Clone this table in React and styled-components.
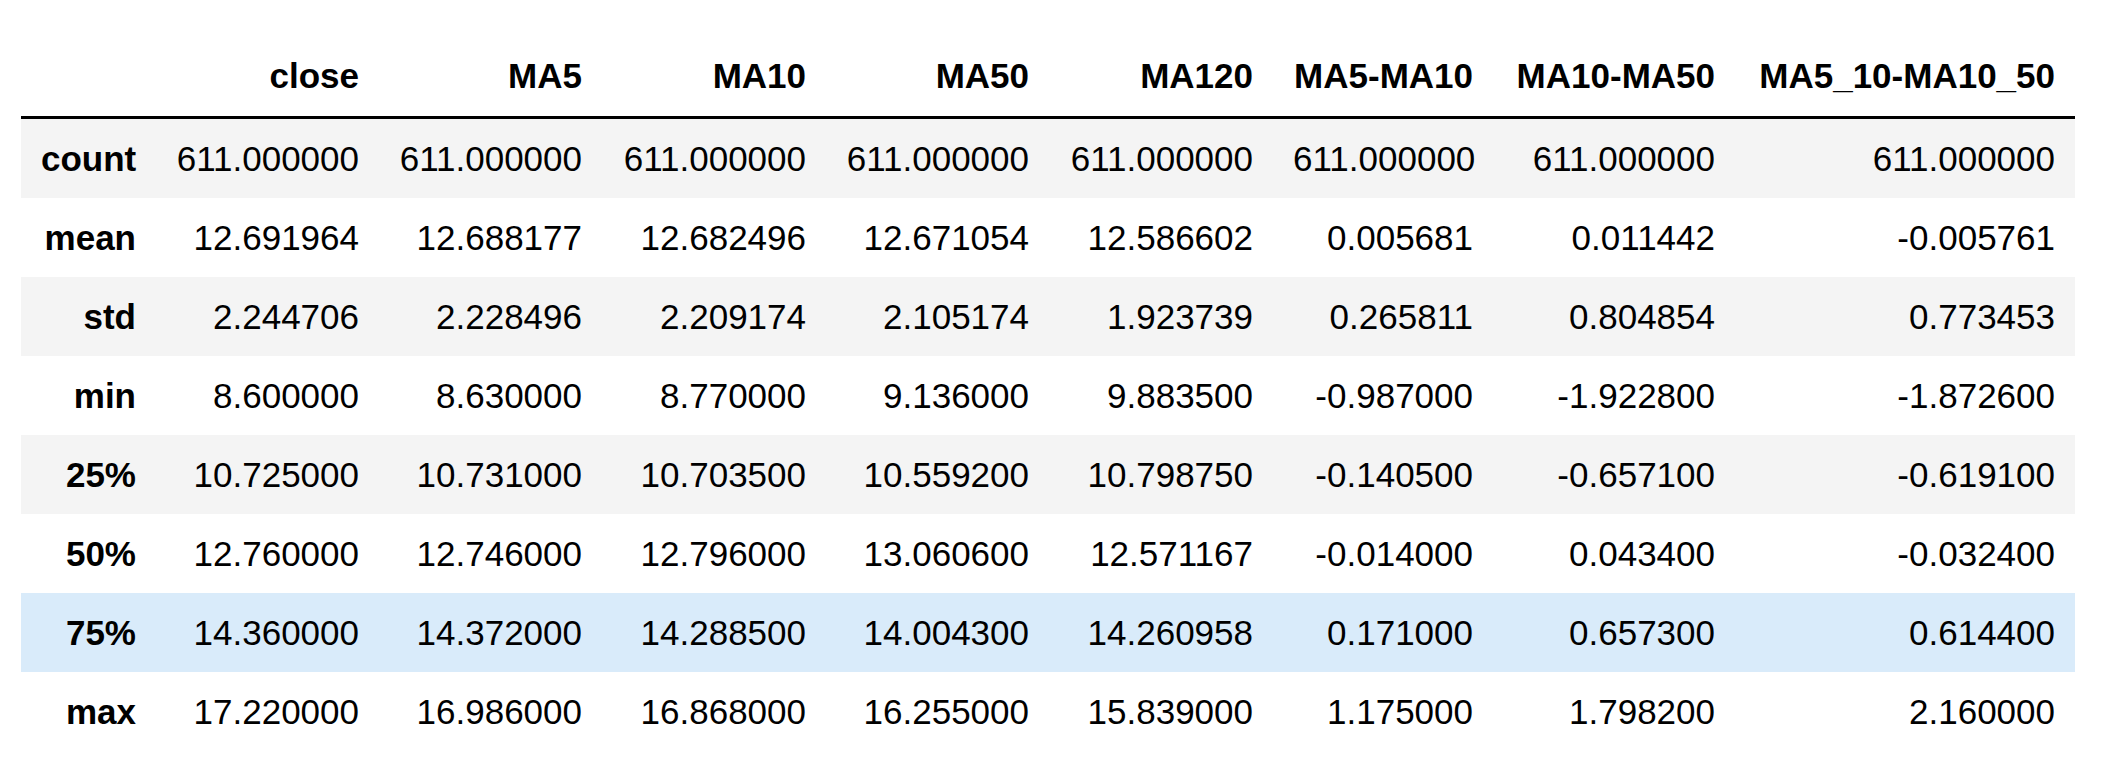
import React from 'react'
import styled, { createGlobalStyle } from 'styled-components'

const GlobalStyle = createGlobalStyle`
  html, body {
    margin: 0;
    padding: 0;
    background: #fff;
  }
  body {
    font-family: "Liberation Sans", Arial, sans-serif;
    color: #000;
  }
`

const columns = [
  { name: '', width: 135 },
  { name: 'close', width: 223 },
  { name: 'MA5', width: 223 },
  { name: 'MA10', width: 224 },
  { name: 'MA50', width: 223 },
  { name: 'MA120', width: 224 },
  { name: 'MA5-MA10', width: 220 },
  { name: 'MA10-MA50', width: 242 },
  { name: 'MA5_10-MA10_50', width: 340 },
]

const rows = [
  ['count', '611.000000', '611.000000', '611.000000', '611.000000', '611.000000', '611.000000', '611.000000', '611.000000'],
  ['mean', '12.691964', '12.688177', '12.682496', '12.671054', '12.586602', '0.005681', '0.011442', '-0.005761'],
  ['std', '2.244706', '2.228496', '2.209174', '2.105174', '1.923739', '0.265811', '0.804854', '0.773453'],
  ['min', '8.600000', '8.630000', '8.770000', '9.136000', '9.883500', '-0.987000', '-1.922800', '-1.872600'],
  ['25%', '10.725000', '10.731000', '10.703500', '10.559200', '10.798750', '-0.140500', '-0.657100', '-0.619100'],
  ['50%', '12.760000', '12.746000', '12.796000', '13.060600', '12.571167', '-0.014000', '0.043400', '-0.032400'],
  ['75%', '14.360000', '14.372000', '14.288500', '14.004300', '14.260958', '0.171000', '0.657300', '0.614400'],
  ['max', '17.220000', '16.986000', '16.868000', '16.255000', '15.839000', '1.175000', '1.798200', '2.160000'],
]

// row that sits under the mouse pointer in the screenshot
const HOVERED = 6

const Page = styled.div`
  padding: 35px 0 0 21px;
`

const Frame = styled.table`
  table-layout: fixed;
  width: 2054px;
  border-collapse: separate;
  border-spacing: 0;
  font-size: 35px;
`

const Col = styled.col`
  width: ${props => props.$w}px;
`

const HeadCell = styled.th`
  height: 81px;
  padding: 0 20px;
  text-align: right;
  vertical-align: middle;
  font-weight: bold;
  white-space: nowrap;
  border-bottom: 3px solid #000;
`

const Row = styled.tr`
  background: ${props =>
    props.$hover ? '#d9ebfa' : props.$odd ? '#f4f4f4' : '#fff'};
`

const IndexCell = styled.th`
  height: 79px;
  padding: 0 20px;
  text-align: right;
  vertical-align: middle;
  font-weight: bold;
  white-space: nowrap;
`

const Cell = styled.td`
  height: 79px;
  padding: 0 20px;
  text-align: right;
  vertical-align: middle;
  white-space: nowrap;
`

const App = () => {
  return (
    <>
      <GlobalStyle />
      <Page>
        <Frame>
          <colgroup>
            {columns.map((c, i) => (
              <Col key={i} $w={c.width} />
            ))}
          </colgroup>
          <thead>
            <tr>
              {columns.map((c, i) => (
                <HeadCell key={i}>{c.name}</HeadCell>
              ))}
            </tr>
          </thead>
          <tbody>
            {rows.map((r, i) => (
              <Row key={r[0]} $odd={i % 2 === 0} $hover={i === HOVERED}>
                <IndexCell>{r[0]}</IndexCell>
                {r.slice(1).map((v, j) => (
                  <Cell key={j}>{v}</Cell>
                ))}
              </Row>
            ))}
          </tbody>
        </Frame>
      </Page>
    </>
  )
}

export default App
